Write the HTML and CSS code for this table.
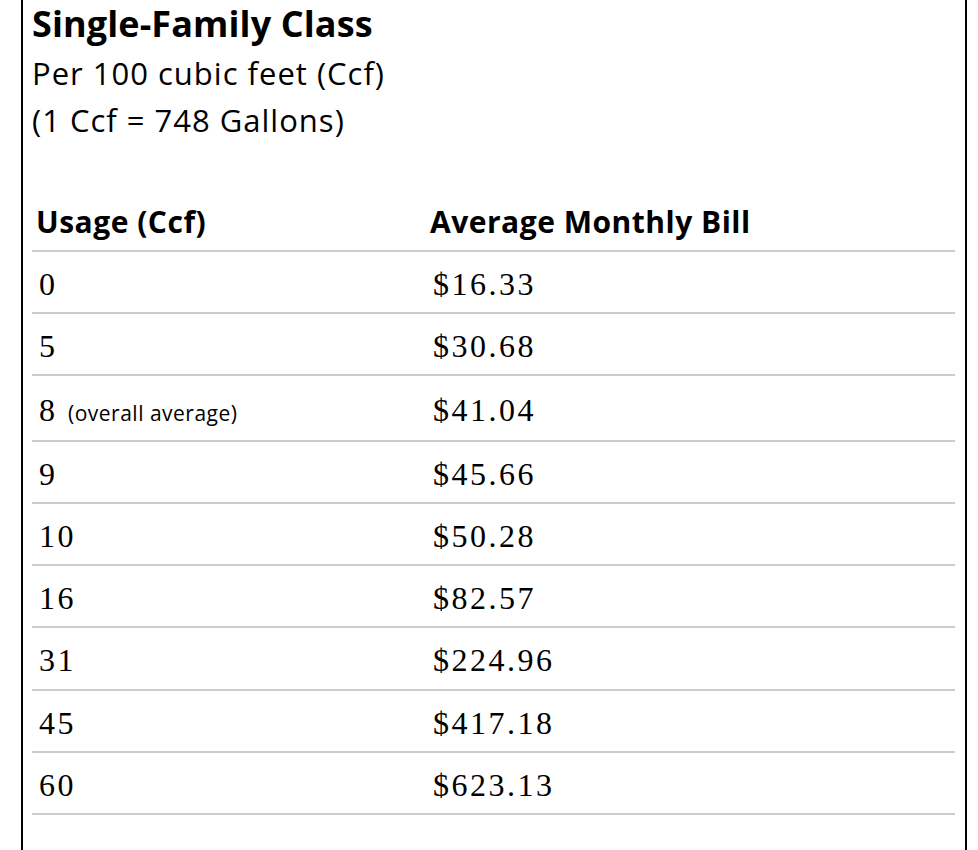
FILE: index.html
```html
<!DOCTYPE html>
<html>
<head>
<meta charset="utf-8">
<link rel="stylesheet" href="styles.css">
</head>
<body>
<div class="panel">
  <h2 class="title">Single-Family Class</h2>
  <p class="sub">Per 100 cubic feet (Ccf)<br>(1 Ccf = 748 Gallons)</p>
  <table class="rates">
    <thead>
      <tr><th class="c1">Usage (Ccf)</th><th class="c2">Average Monthly Bill</th></tr>
    </thead>
    <tbody>
      <tr><td>0</td><td>$16.33</td></tr>
      <tr><td>5</td><td>$30.68</td></tr>
      <tr class="tall"><td>8 <span class="note">(overall average)</span></td><td>$41.04</td></tr>
      <tr><td>9</td><td>$45.66</td></tr>
      <tr><td>10</td><td>$50.28</td></tr>
      <tr><td>16</td><td>$82.57</td></tr>
      <tr class="plus"><td>31</td><td>$224.96</td></tr>
      <tr><td>45</td><td>$417.18</td></tr>
      <tr><td>60</td><td>$623.13</td></tr>
    </tbody>
  </table>
</div>
</body>
</html>
```

FILE: styles.css
```css
html, body {
  margin: 0;
  padding: 0;
  background: #fff;
}
body {
  padding-left: 21px;
  width: 946px;
  color: #000;
  font-family: "Open Sans", Lato, sans-serif;
}
.panel {
  border-left: 2px solid #000;
  border-right: 2px solid #000;
  min-height: 850px;
  padding: 0 10px 0 9px;
  box-sizing: border-box;
}
.title {
  margin: 0;
  padding-top: 2px;
  font-size: 36px;
  font-weight: 700;
  line-height: 44px;
  letter-spacing: 0.1px;
}
.sub {
  margin: 4px 0 0 0;
  font-size: 31px;
  line-height: 47px;
  letter-spacing: 1px;
}
.rates {
  border-collapse: collapse;
  width: 923px;
  margin-top: 57px;
}
.rates th {
  text-align: left;
  font-weight: 700;
  font-size: 30px;
  letter-spacing: 0.5px;
  padding: 0 4px 8px 4px;
  border-bottom: 2px solid #ccc;
  vertical-align: bottom;
}
.rates th.c1 { width: 386px; }
.rates td {
  height: 62px;
  padding: 4px 5px 0 7px;
  border-bottom: 2px solid #ccc;
  font-family: "Liberation Serif", serif;
  font-size: 32px;
  letter-spacing: 2.5px;
  vertical-align: middle;
  box-sizing: border-box;
}
.rates tr.tall td { height: 66px; }
.rates tr.plus td { height: 63px; }
.note {
  font-family: "Open Sans", Lato, sans-serif;
  font-size: 21px;
  letter-spacing: 0.5px;
}
```
